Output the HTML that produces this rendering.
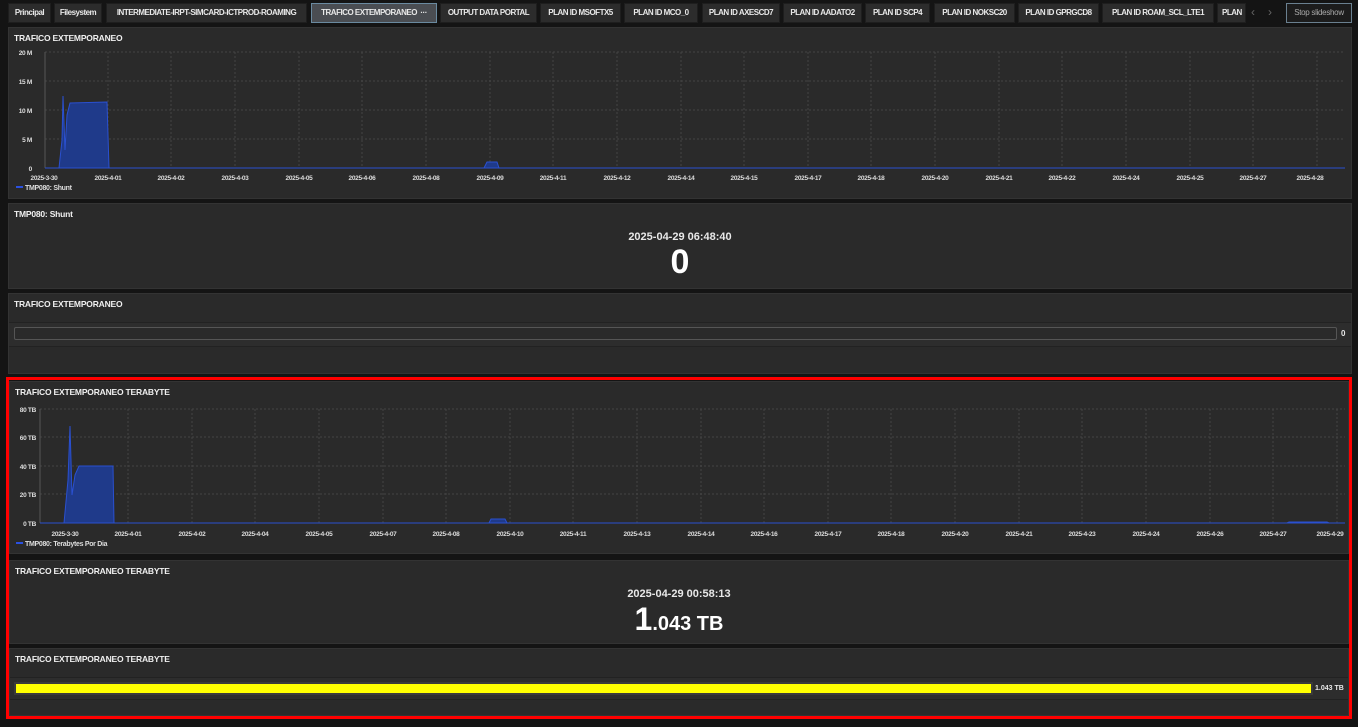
<!DOCTYPE html>
<html><head><meta charset="utf-8"><style>
*{margin:0;padding:0;box-sizing:border-box}
body{width:1358px;height:727px;background:#141414;font-family:"Liberation Sans",Arial,sans-serif;color:#e8e8e8;position:relative;overflow:hidden}
.a{position:absolute}
.tab{position:absolute;top:3px;height:20px;background:#2c2c2c;border:1px solid #1e1e1e;font-size:8px;font-weight:bold;color:#e8e8e8;line-height:18px;text-align:center;white-space:nowrap;overflow:hidden;letter-spacing:-0.5px}
.p{position:absolute;background:#2a2a2a;border:1px solid #333}
.t{position:absolute;left:5px;top:5px;font-size:8.5px;font-weight:bold;color:#f0f0f0;letter-spacing:-0.2px}
svg text{font-family:"Liberation Sans",Arial,sans-serif;font-weight:bold;fill:#ddd;letter-spacing:-0.3px}
</style></head><body>
<div class="tab" style="left:8px;width:43px">Principal</div>
<div class="tab" style="left:54px;width:48px">Filesystem</div>
<div class="tab" style="left:106px;width:201px">INTERMEDIATE-IRPT-SIMCARD-ICTPROD-ROAMING</div>
<div class="tab" style="left:311px;width:126px;background:#4a4d52;border-color:#6a8aa0">TRAFICO EXTEMPORANEO &nbsp;···</div>
<div class="tab" style="left:440px;width:97px">OUTPUT DATA PORTAL</div>
<div class="tab" style="left:540px;width:81px">PLAN ID MSOFTX5</div>
<div class="tab" style="left:624px;width:74px">PLAN ID MCO_0</div>
<div class="tab" style="left:702px;width:78px">PLAN ID AXESCD7</div>
<div class="tab" style="left:783px;width:79px">PLAN ID AADATO2</div>
<div class="tab" style="left:865px;width:65px">PLAN ID SCP4</div>
<div class="tab" style="left:934px;width:81px">PLAN ID NOKSC20</div>
<div class="tab" style="left:1018px;width:81px">PLAN ID GPRGCD8</div>
<div class="tab" style="left:1102px;width:112px">PLAN ID ROAM_SCL_LTE1</div>
<div class="tab" style="left:1217px;width:29px;text-align:left;padding-left:4px">PLAN</div>
<div class="a" style="left:1251px;top:5px;font-size:12px;color:#666">‹</div>
<div class="a" style="left:1268px;top:5px;font-size:12px;color:#666">›</div>
<div class="tab" style="left:1286px;width:66px;background:#1c1c1c;border-color:#6a8090;font-weight:normal;color:#aaa;letter-spacing:-0.3px">Stop slideshow</div>

<div class="p" style="left:8px;top:27px;width:1344px;height:172px"><div class="t">TRAFICO EXTEMPORANEO</div></div>
<svg class="a" style="left:0;top:0" width="1358" height="200">
<g stroke="#444" stroke-dasharray="2,2" stroke-width="1">
<line x1="45" y1="52" x2="1345" y2="52"/><line x1="45" y1="81" x2="1345" y2="81"/><line x1="45" y1="110" x2="1345" y2="110"/><line x1="45" y1="139" x2="1345" y2="139"/>
<line x1="108" y1="52" x2="108" y2="168"/><line x1="171" y1="52" x2="171" y2="168"/><line x1="235" y1="52" x2="235" y2="168"/><line x1="299" y1="52" x2="299" y2="168"/><line x1="362" y1="52" x2="362" y2="168"/><line x1="426" y1="52" x2="426" y2="168"/><line x1="490" y1="52" x2="490" y2="168"/><line x1="553" y1="52" x2="553" y2="168"/><line x1="617" y1="52" x2="617" y2="168"/><line x1="681" y1="52" x2="681" y2="168"/><line x1="744" y1="52" x2="744" y2="168"/><line x1="808" y1="52" x2="808" y2="168"/><line x1="871" y1="52" x2="871" y2="168"/><line x1="935" y1="52" x2="935" y2="168"/><line x1="999" y1="52" x2="999" y2="168"/><line x1="1062" y1="52" x2="1062" y2="168"/><line x1="1126" y1="52" x2="1126" y2="168"/><line x1="1190" y1="52" x2="1190" y2="168"/><line x1="1253" y1="52" x2="1253" y2="168"/><line x1="1317" y1="52" x2="1317" y2="168"/>
</g>
<line x1="45" y1="52" x2="45" y2="168" stroke="#555"/>
<path d="M59 168 L62 140 L63 96 L65 150 L67 115 L70 103 L107 102 L109 168 Z" fill="#1f3a8a" stroke="#2a50d0"/>
<path d="M484 168 L487 162 L497 162 L499 168 Z" fill="#1f3a8a" stroke="#2a50d0"/>
<line x1="45" y1="168" x2="1345" y2="168" stroke="#2a50d0"/>
<g font-size="6.5" text-anchor="end"><text x="32" y="55">20 M</text><text x="32" y="84">15 M</text><text x="32" y="113">10 M</text><text x="32" y="142">5 M</text><text x="32" y="171">0</text></g>
<g font-size="6.5" text-anchor="middle"><text x="44" y="180">2025-3-30</text><text x="108" y="180">2025-4-01</text><text x="171" y="180">2025-4-02</text><text x="235" y="180">2025-4-03</text><text x="299" y="180">2025-4-05</text><text x="362" y="180">2025-4-06</text><text x="426" y="180">2025-4-08</text><text x="490" y="180">2025-4-09</text><text x="553" y="180">2025-4-11</text><text x="617" y="180">2025-4-12</text><text x="681" y="180">2025-4-14</text><text x="744" y="180">2025-4-15</text><text x="808" y="180">2025-4-17</text><text x="871" y="180">2025-4-18</text><text x="935" y="180">2025-4-20</text><text x="999" y="180">2025-4-21</text><text x="1062" y="180">2025-4-22</text><text x="1126" y="180">2025-4-24</text><text x="1190" y="180">2025-4-25</text><text x="1253" y="180">2025-4-27</text><text x="1310" y="180">2025-4-28</text></g>
<rect x="16" y="186" width="7" height="2" fill="#2a50e0"/><text x="25" y="190" font-size="7" font-weight="normal">TMP080: Shunt</text>
</svg>

<div class="p" style="left:8px;top:203px;width:1344px;height:86px"><div class="t">TMP080: Shunt</div>
<div class="a" style="left:0;right:0;top:27px;text-align:center;font-size:11px;font-weight:bold">2025-04-29 06:48:40</div>
<div class="a" style="left:0;right:0;top:39px;text-align:center;font-size:34px;font-weight:bold;color:#fff">0</div></div>

<div class="p" style="left:8px;top:293px;width:1344px;height:81px"><div class="t">TRAFICO EXTEMPORANEO</div>
<div class="a" style="left:0;right:0;top:28px;height:25px;border-top:1px solid #222;border-bottom:1px solid #222;background:#2d2d2d"></div>
<div class="a" style="left:5px;width:1323px;top:33px;height:13px;border:1px solid #555;border-radius:2px;background:#2a2a2a"></div>
<div class="a" style="left:1332px;top:35px;font-size:8px;font-weight:bold">0</div></div>

<div class="a" style="left:6px;top:377px;width:1346px;height:342px;border:3px solid #f00"></div>
<div class="p" style="left:9px;top:381px;width:1340px;height:173px"><div class="t">TRAFICO EXTEMPORANEO TERABYTE</div></div>
<svg class="a" style="left:0;top:380" width="1358" height="175">
<g stroke="#444" stroke-dasharray="2,2"><line x1="40" y1="29" x2="1345" y2="29"/><line x1="40" y1="57" x2="1345" y2="57"/><line x1="40" y1="86" x2="1345" y2="86"/><line x1="40" y1="114" x2="1345" y2="114"/>
<line x1="128" y1="29" x2="128" y2="143"/><line x1="192" y1="29" x2="192" y2="143"/><line x1="255" y1="29" x2="255" y2="143"/><line x1="319" y1="29" x2="319" y2="143"/><line x1="383" y1="29" x2="383" y2="143"/><line x1="446" y1="29" x2="446" y2="143"/><line x1="510" y1="29" x2="510" y2="143"/><line x1="573" y1="29" x2="573" y2="143"/><line x1="637" y1="29" x2="637" y2="143"/><line x1="701" y1="29" x2="701" y2="143"/><line x1="764" y1="29" x2="764" y2="143"/><line x1="828" y1="29" x2="828" y2="143"/><line x1="891" y1="29" x2="891" y2="143"/><line x1="955" y1="29" x2="955" y2="143"/><line x1="1019" y1="29" x2="1019" y2="143"/><line x1="1082" y1="29" x2="1082" y2="143"/><line x1="1146" y1="29" x2="1146" y2="143"/><line x1="1210" y1="29" x2="1210" y2="143"/><line x1="1273" y1="29" x2="1273" y2="143"/><line x1="1337" y1="29" x2="1337" y2="143"/></g>
<line x1="40" y1="29" x2="40" y2="143" stroke="#555"/>
<path d="M64 143 L68 100 L70 46 L72 115 L75 95 L79 86 L113 86 L114 143 Z" fill="#1f3a8a" stroke="#2a50d0"/>
<path d="M489 143 L491 139 L505 139 L507 143 Z" fill="#1f3a8a" stroke="#2a50d0"/>
<path d="M1287 143 L1289 142 L1327 142 L1329 143 Z" fill="#1f3a8a" stroke="#2a50d0"/>
<line x1="40" y1="143" x2="1345" y2="143" stroke="#2a50d0"/>
<g font-size="6.5" text-anchor="end"><text x="36" y="32">80 TB</text><text x="36" y="60">60 TB</text><text x="36" y="89">40 TB</text><text x="36" y="117">20 TB</text><text x="36" y="146">0 TB</text></g>
<g font-size="6.5" text-anchor="middle"><text x="65" y="156">2025-3-30</text><text x="128" y="156">2025-4-01</text><text x="192" y="156">2025-4-02</text><text x="255" y="156">2025-4-04</text><text x="319" y="156">2025-4-05</text><text x="383" y="156">2025-4-07</text><text x="446" y="156">2025-4-08</text><text x="510" y="156">2025-4-10</text><text x="573" y="156">2025-4-11</text><text x="637" y="156">2025-4-13</text><text x="701" y="156">2025-4-14</text><text x="764" y="156">2025-4-16</text><text x="828" y="156">2025-4-17</text><text x="891" y="156">2025-4-18</text><text x="955" y="156">2025-4-20</text><text x="1019" y="156">2025-4-21</text><text x="1082" y="156">2025-4-23</text><text x="1146" y="156">2025-4-24</text><text x="1210" y="156">2025-4-26</text><text x="1273" y="156">2025-4-27</text><text x="1330" y="156">2025-4-29</text></g>
<rect x="16" y="162" width="7" height="2" fill="#2a50e0"/><text x="25" y="166" font-size="7" font-weight="normal">TMP080: Terabytes Por Dia</text>
</svg>

<div class="p" style="left:9px;top:560px;width:1340px;height:84px"><div class="t">TRAFICO EXTEMPORANEO TERABYTE</div>
<div class="a" style="left:0;right:0;top:27px;text-align:center;font-size:11px;font-weight:bold">2025-04-29 00:58:13</div>
<div class="a" style="left:0;right:0;top:40px;text-align:center;font-weight:bold;color:#fff"><span style="font-size:32px">1</span><span style="font-size:20px">.043 TB</span></div></div>

<div class="p" style="left:9px;top:648px;width:1340px;height:68px"><div class="t">TRAFICO EXTEMPORANEO TERABYTE</div>
<div class="a" style="left:0;right:0;top:28px;height:23px;border-top:1px solid #222;border-bottom:1px solid #222;background:#2d2d2d"></div>
<div class="a" style="left:4px;width:1299px;top:33px;height:13px;border:2px solid #3a3a3a;background:#ffff00"></div>
<div class="a" style="left:1305px;top:36px;font-size:7px;font-weight:bold">1.043 TB</div></div>
</body></html>
